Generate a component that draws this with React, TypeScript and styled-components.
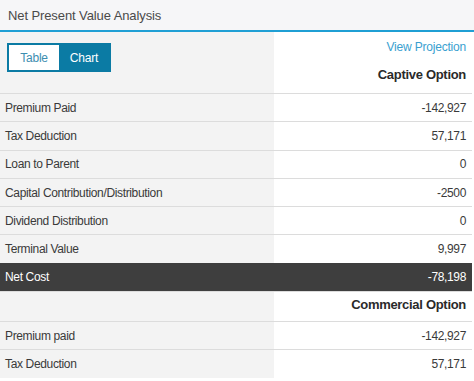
import React from "react";
import styled, { createGlobalStyle } from "styled-components";

const GlobalStyle = createGlobalStyle`
  body {
    margin: 0;
    font-family: "Liberation Sans", Arial, sans-serif;
    background: #ffffff;
  }
`;

interface RowData {
  label: string;
  value: string;
}

const captiveRows: RowData[] = [
  { label: "Premium Paid", value: "-142,927" },
  { label: "Tax Deduction", value: "57,171" },
  { label: "Loan to Parent", value: "0" },
  { label: "Capital Contribution/Distribution", value: "-2500" },
  { label: "Dividend Distribution", value: "0" },
  { label: "Terminal Value", value: "9,997" },
];

const commercialRows: RowData[] = [
  { label: "Premium paid", value: "-142,927" },
  { label: "Tax Deduction", value: "57,171" },
];

const App: React.FC = () => {
  return (
    <>
      <GlobalStyle />
      <Panel>
        <Header>Net Present Value Analysis</Header>
        <Grid>
          <LabelCell $tall>
            <Toggle>
              <ToggleButton>Table</ToggleButton>
              <ToggleButton $active>Chart</ToggleButton>
            </Toggle>
          </LabelCell>
          <ValueCell $tall>
            <HeadStack>
              <Link>View Projection</Link>
              <OptionTitle>Captive Option</OptionTitle>
            </HeadStack>
          </ValueCell>

          {captiveRows.map((r) => (
            <React.Fragment key={r.label}>
              <LabelCell $border>{r.label}</LabelCell>
              <ValueCell $border>{r.value}</ValueCell>
            </React.Fragment>
          ))}

          <LabelCell $dark>Net Cost</LabelCell>
          <ValueCell $dark>-78,198</ValueCell>

          <LabelCell $section />
          <ValueCell $section>
            <OptionTitle>Commercial Option</OptionTitle>
          </ValueCell>

          {commercialRows.map((r) => (
            <React.Fragment key={r.label}>
              <LabelCell $border>{r.label}</LabelCell>
              <ValueCell $border>{r.value}</ValueCell>
            </React.Fragment>
          ))}
        </Grid>
      </Panel>
    </>
  );
};

export default App;

const Panel = styled.div`
  width: 474px;
  height: 381px;
  overflow: hidden;
  background: #ffffff;
`;

const Header = styled.div`
  height: 32px;
  box-sizing: border-box;
  padding: 0 8px;
  display: flex;
  align-items: center;
  background: #f6f6f8;
  border-bottom: 2px solid #1f9fd4;
  color: #4a4a4a;
  font-size: 13px;
  letter-spacing: -0.1px;
`;

const Grid = styled.div`
  display: grid;
  grid-template-columns: 274px 1fr;
  padding-right: 2px;
`;

interface CellProps {
  $border?: boolean;
  $dark?: boolean;
  $tall?: boolean;
  $section?: boolean;
}

const cellHeight = (p: CellProps) => (p.$tall ? "61px" : p.$section ? "30px" : "28.3px");

const LabelCell = styled.div<CellProps>`
  box-sizing: border-box;
  height: ${cellHeight};
  display: flex;
  align-items: ${(p) => (p.$tall ? "flex-start" : "center")};
  padding: ${(p) => (p.$tall ? "11px 7px 0" : "0 5px")};
  font-size: 12px;
  letter-spacing: -0.35px;
  color: ${(p) => (p.$dark ? "#ffffff" : "#3a3a3a")};
  background: ${(p) => (p.$dark ? "#3e3e3e" : "#f3f3f3")};
  border-top: ${(p) => (p.$border || p.$section ? "1px solid #dcdcdc" : "none")};
`;

const ValueCell = styled(LabelCell)`
  justify-content: flex-end;
  padding: ${(p) => (p.$tall ? "8px 6px 0" : "0 6px")};
  background: ${(p) => (p.$dark ? "#3e3e3e" : "#ffffff")};
  ${(p) => p.$section && "align-items: flex-start; padding-top: 5px;"}
`;

const Toggle = styled.div`
  display: flex;
  border: 2px solid #0b7ba4;
`;

const ToggleButton = styled.div<{ $active?: boolean }>`
  width: 50px;
  height: 25px;
  display: flex;
  align-items: center;
  justify-content: center;
  font-size: 12px;
  letter-spacing: -0.2px;
  background: ${(p) => (p.$active ? "#0b7ba4" : "#ffffff")};
  color: ${(p) => (p.$active ? "#ffffff" : "#3d8eb0")};
`;

const HeadStack = styled.div`
  display: flex;
  flex-direction: column;
  align-items: flex-end;
  gap: 13px;
`;

const Link = styled.span`
  font-size: 12px;
  letter-spacing: -0.2px;
  color: #3a9fd0;
`;

const OptionTitle = styled.span`
  font-size: 13px;
  font-weight: bold;
  letter-spacing: -0.3px;
  color: #2a2a2a;
`;
